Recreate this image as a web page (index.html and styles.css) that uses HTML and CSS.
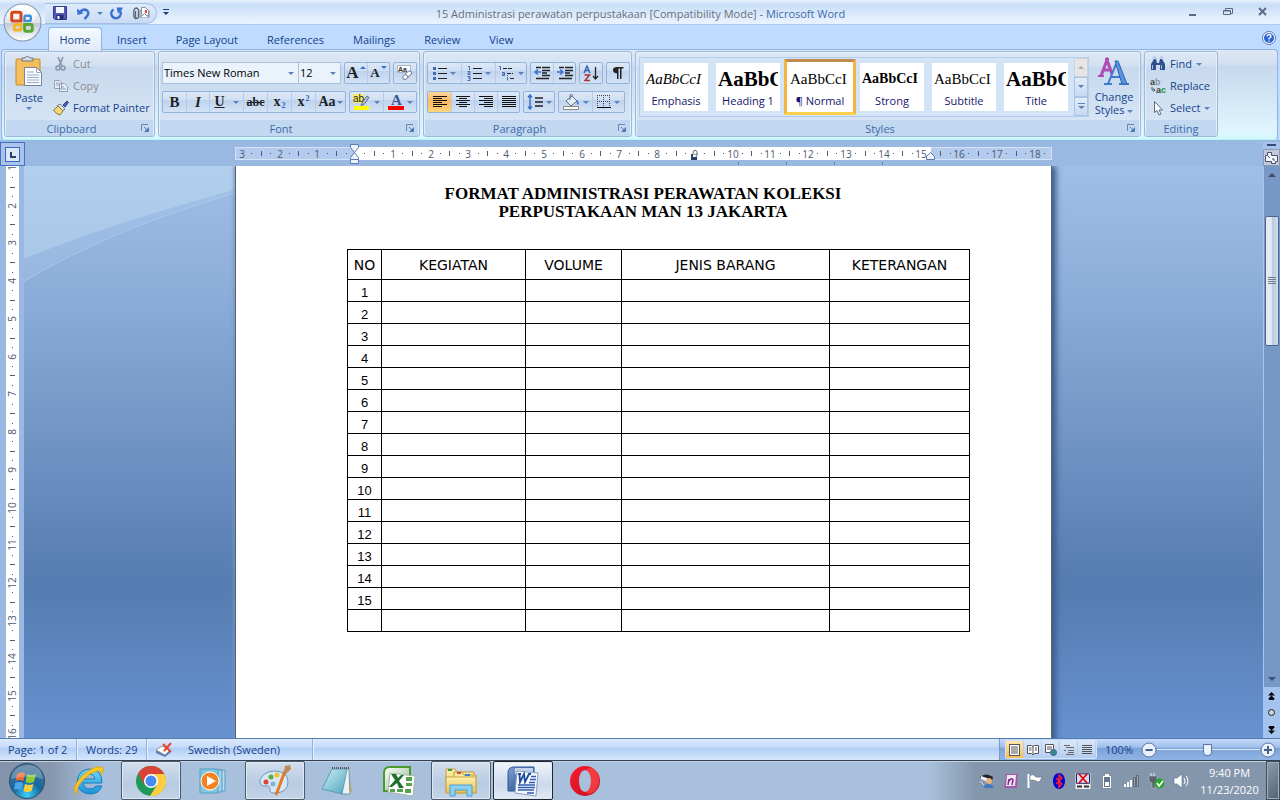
FILE: index.html
```html
<!DOCTYPE html>
<html lang="en">
<head>
<meta charset="utf-8">
<title>15 Administrasi perawatan perpustakaan [Compatibility Mode] - Microsoft Word</title>
<link rel="stylesheet" href="styles.css">
</head>
<body>
<svg class="defs" aria-hidden="true">
  <defs>
    <linearGradient id="gOrb" x1="0" y1="0" x2="0" y2="1"><stop offset="0" stop-color="#fdfdfe"/><stop offset=".5" stop-color="#dfe3ea"/><stop offset=".52" stop-color="#c3cad6"/><stop offset="1" stop-color="#fff"/></linearGradient>
    <linearGradient id="gGreen" x1="0" y1="0" x2="1" y2="1"><stop offset="0" stop-color="#fff"/><stop offset="1" stop-color="#8fb787"/></linearGradient>
    <linearGradient id="gNavy" x1="0" y1="0" x2="1" y2="1"><stop offset="0" stop-color="#7fa2d6"/><stop offset="1" stop-color="#1c3f86"/></linearGradient>
    <linearGradient id="gPad" x1="0" y1="0" x2="1" y2="1"><stop offset="0" stop-color="#d2f0f5"/><stop offset="1" stop-color="#4aa4bd"/></linearGradient>
    <linearGradient id="gRed" x1="0" y1="0" x2="1" y2="1"><stop offset="0" stop-color="#ff1b2d"/><stop offset="1" stop-color="#c0101f"/></linearGradient>
    <radialGradient id="gStart" cx=".5" cy=".9" r=".9"><stop offset="0" stop-color="#3fd0f5"/><stop offset=".45" stop-color="#1667a0"/><stop offset="1" stop-color="#4d7391"/></radialGradient>
    <linearGradient id="gIe" x1="0" y1="0" x2="0" y2="1"><stop offset="0" stop-color="#73d6fb"/><stop offset="1" stop-color="#1a93d8"/></linearGradient>
    <linearGradient id="gFolder" x1="0" y1="0" x2="0" y2="1"><stop offset="0" stop-color="#fdf0ae"/><stop offset="1" stop-color="#e2c057"/></linearGradient>
    <symbol id="launch" viewBox="0 0 8 8"><path d="M.5 7V.5H7" fill="none" stroke="#6486b8"/><path d="M3 3l3 3M7.500 3.500v4h-4" fill="none" stroke="#4f78ad"/><path d="M7 4v3H4z" fill="#4f78ad"/></symbol>
  </defs>
</svg>

<header class="titlebar">
  <button class="orb" aria-label="Office Button">
    <svg viewBox="0 0 38 38"><circle cx="19" cy="19" r="18" fill="url(#gOrb)" stroke="#8693a8"/><ellipse cx="19" cy="11" rx="14" ry="9" fill="#fff" opacity=".5"/>
      <path d="M17.500 17.500H10q-1.500 0-1.500-1.500v-5.500Q8.500 9 10 9h6q1.500 0 1.500 1.500z" fill="none" stroke="#d8481c" stroke-width="3"/>
      <path d="M21 17.500v-4q0-1 1-1h4q1 0 1 1v3q0 1-1 1z" fill="none" stroke="#3d8fd8" stroke-width="2.400"/>
      <path d="M17.500 21v4.500q0 1-1 1H12q-1 0-1-1V22q0-1 1-1z" fill="none" stroke="#f5b51c" stroke-width="2.600"/>
      <path d="M21 21h6q1.500 0 1.500 1.500V26q0 1.500-1.500 1.500h-4.500Q21 27.500 21 26z" fill="none" stroke="#58a630" stroke-width="2.800"/></svg>
  </button>
  <div class="qat">
    <button aria-label="Save"><svg width="14" height="14" viewBox="0 0 14 14"><path d="M.5.500h13v13H2L.5 12z" fill="#5456b8" stroke="#36398e"/><path d="M3 1h8v6H3z" fill="#f3f6ff"/><path d="M3.500 9h7v4.500h-7z" fill="#25296d"/><path d="M4.500 10h2v3h-2z" fill="#fff"/></svg></button>
    <button aria-label="Undo"><svg width="13" height="13" viewBox="0 0 13 13"><path d="M3 4.500Q8 1 10.500 4t-3 8" fill="none" stroke="#3c70cf" stroke-width="2.500"/><path d="M0 1.500l.5 6.500 6-1.500z" fill="#3c70cf"/></svg></button>
    <button class="tiny" aria-label="Undo list"><i class="drop"></i></button>
    <button aria-label="Repeat"><svg width="13" height="13" viewBox="0 0 13 13"><path d="M3.500 2.500A4.700 4.700 0 1 0 10 4" fill="none" stroke="#3c70cf" stroke-width="2.500"/><path d="M6.500.5h6V2L8 6.500z" fill="#3c70cf"/></svg></button>
    <button aria-label="E-mail"><svg width="17" height="14" viewBox="0 0 17 14"><path d="M7 4.500h9v7H7z" fill="#fff" stroke="#7a8496"/><path d="M8.500 1.500h4l3 3v5h-7z" fill="#fff" stroke="#8a93a5"/><path d="M7 11.500l4.500-4 4.500 4" fill="#fff" stroke="#7a8496"/><path d="M12 4h2v3h-2z" fill="#d04b38"/><path d="M2.500 5v6q1.500 3 3 0V4Q3.500 0 .8 4v6q0 2 2 3" fill="none" stroke="#5d6677" stroke-width="1.300"/></svg></button>
  </div>
  <button class="qat-more" aria-label="Customize Quick Access Toolbar"><svg width="6" height="6" viewBox="0 0 6 6"><path d="M0 0h6v1H0zM0 3h6L3 6z" fill="#1d3d78"/></svg></button>
  <h1 class="title"><span>15 Administrasi perawatan perpustakaan [Compatibility Mode]</span> - Microsoft Word</h1>
  <div class="window-buttons">
    <button aria-label="Minimize"><svg width="10" height="10" viewBox="0 0 10 10"><path d="M1 8h7" stroke="#5b6a86" stroke-width="2"/></svg></button>
    <button aria-label="Restore"><svg width="10" height="10" viewBox="0 0 10 10"><path d="M2.500 3V1.500h7v5H8M.5 3.500h7v4h-7zM.5 4h7" fill="none" stroke="#5b6a86"/></svg></button>
    <button aria-label="Close"><svg width="10" height="10" viewBox="0 0 10 10"><path d="M1 1l7 7M8 1L1 8" stroke="#5b6a86" stroke-width="2"/></svg></button>
  </div>
</header>

<nav class="tabs" aria-label="Ribbon tabs">
  <button class="tab active">Home</button><button class="tab">Insert</button><button class="tab">Page Layout</button><button class="tab">References</button><button class="tab">Mailings</button><button class="tab">Review</button><button class="tab">View</button>
  <button class="help" aria-label="Help"><svg width="14" height="14" viewBox="0 0 14 14"><circle cx="7" cy="7" r="6.500" fill="#fff" stroke="#5a78b5"/><circle cx="7" cy="7" r="5" fill="#2a62d2"/><path d="M5 5.500Q5.200 3.500 7 3.500T9 5.200Q9 6.300 7 7.500v1M7 9.500v1.200" stroke="#fff" stroke-width="1.400" fill="none"/></svg></button>
</nav>

<section class="ribbon">
  <section class="group clipboard">
    <div class="group-body">
      <button class="big paste"><svg width="28" height="32" viewBox="0 0 28 32"><rect x="1" y="3" width="24" height="26" rx="1" fill="#f3bf5c" stroke="#c18a33"/><path d="M7 5V2h3q2-4 5 0h3v3z" fill="#d7dbe2" stroke="#6c7482"/><path d="M9.500 11.500h12l5 5v13h-17z" fill="#f8fbff" stroke="#74849d"/><path d="M21.500 11.500v5h5M12 16h7M12 19h12M12 21.500h12M12 24h12M12 26.500h12" stroke="#9aabc5" fill="none"/></svg>Paste<i class="drop"></i></button>
      <div class="stack">
        <button class="off"><svg width="16" height="16" viewBox="0 0 16 16"><path d="M5 1l4 9M10 1L6 10" stroke="#8a98ae" stroke-width="1.700"/><circle cx="5" cy="12" r="2" fill="none" stroke="#8a98ae" stroke-width="1.600"/><circle cx="10" cy="12" r="2" fill="none" stroke="#8a98ae" stroke-width="1.600"/></svg>Cut</button>
        <button class="off"><svg width="16" height="16" viewBox="0 0 16 16"><path d="M1.500 2.500h5l2 2v6h-7z M6.500 5.500h5l3 3v5h-8z" fill="#e6edf7" stroke="#93a1b8"/><path d="M3 5h3M3 7h3M8 9h3M8 11h5" stroke="#93a1b8"/></svg>Copy</button>
        <button><svg width="16" height="16" viewBox="0 0 16 16"><path d="M10 5l4-4 1.500 1.500L12 7z" fill="#4d5fae" stroke="#34407c"/><path d="M7 4l5 5-3 2-5-5z" fill="#dfe5ee" stroke="#68748a"/><path d="M5 6l5 5-3 4q-4-1-6.500-5Q3 8 5 6z" fill="#f3d877" stroke="#8d7434"/></svg>Format Painter</button>
      </div>
    </div>
    <footer>Clipboard<button aria-label="Clipboard options"><svg><use href="#launch"/></svg></button></footer>
  </section>

  <section class="group font">
    <div class="group-body rows">
      <div class="row">
        <div class="combos">
          <div class="combo name"><select aria-label="Font"><option>Times New Roman</option></select><i class="drop"></i></div>
          <div class="combo size"><select aria-label="Font size"><option>12</option></select><i class="drop"></i></div>
        </div>
        <div class="set"><button class="w22 serif big-a" aria-label="Grow font">A<sup class="tri-up"></sup></button><button class="w22 serif small-a" aria-label="Shrink font">A<sup class="tri-down"></sup></button></div>
        <div class="set"><button class="w22" aria-label="Clear formatting"><svg width="16" height="16" viewBox="0 0 16 16"><path d="M.5.500h13v7H.5z" fill="#fff" stroke="#a9b4c6"/><text x="1" y="7" class="icon-aa">Aa</text><path d="M5.500 12l6-6q3-.5 3.500 2l-6 6.500q-3.500.5-3.500-2.500z" fill="#fff" stroke="#66738d"/><path d="M8 9.500q3 .5 3 3" fill="none" stroke="#66738d"/></svg></button></div>
      </div>
      <div class="row">
        <div class="set">
          <button class="w23 serif b">B</button><button class="w23 serif it">I</button><button class="w34 serif u"><u>U</u><i class="drop"></i></button><button class="w24 serif s"><s>abc</s></button><button class="w24 serif sub" aria-label="Subscript">x<sub>2</sub></button><button class="w24 serif sub" aria-label="Superscript">x<sup>2</sup></button><button class="w30 serif aa">Aa<i class="drop"></i></button>
        </div>
        <div class="set">
          <button class="w33" aria-label="Highlight"><svg width="18" height="17" viewBox="0 0 18 17"><rect x="0" y="0" width="10" height="9" fill="#ffef5c"/><text x="0" y="8" class="icon-ab">ab</text><path d="M9 9l5-7 2 1.500-5 7-3 1z" fill="#b6c3d9" stroke="#5e6a80"/><path d="M1 12h15v4H1z" fill="#ffff00"/></svg><i class="drop"></i></button><button class="w33" aria-label="Font color"><svg width="16" height="17" viewBox="0 0 16 17"><text x="3" y="11" class="icon-color">A</text><path d="M0 12h16v4H0z" fill="#f00"/></svg><i class="drop"></i></button>
        </div>
      </div>
    </div>
    <footer>Font<button aria-label="Font options"><svg><use href="#launch"/></svg></button></footer>
  </section>

  <section class="group para">
    <div class="group-body rows">
      <div class="row">
        <div class="set">
          <button class="w33" aria-label="Bullets"><svg width="14" height="14" viewBox="0 0 14 14"><path d="M5 2.500h9M5 7.500h9M5 12.500h9" stroke="#222"/><path d="M0 1h3v3H0zM0 6h3v3H0zM0 11h3v3H0z" fill="#4468b0"/></svg><i class="drop"></i></button><button class="w34" aria-label="Numbering"><svg width="15" height="15" viewBox="0 0 15 15"><path d="M6 2.500h9M6 7.500h9M6 12.500h9" stroke="#222"/><path d="M1 .5h1.500V4M.5 5.500H3V7H1v1.500h2.500M.5 10.500H3V12H1M3 12v2.500H.5" fill="none" stroke="#4468b0"/></svg><i class="drop"></i></button><button class="w31" aria-label="Multilevel list"><svg width="17" height="15" viewBox="0 0 17 15"><path d="M5 2.500h9M9 7.500h6M12 12.500h5" stroke="#222" stroke-dasharray="4 1"/><path d="M1 .5h1.500V4M4 6.500h2.500v3H4.500V8h2M9.500 11v3.500M9.500 9v1" fill="none" stroke="#4468b0"/></svg><i class="drop"></i></button>
        </div>
        <div class="set"><button class="w22" aria-label="Decrease indent"><svg width="16" height="14" viewBox="0 0 16 14"><path d="M2 1.500h5M8 1.500h8M8 4.500h8M8 7h5M8 9.500h8M2 12.500h13" stroke="#222" stroke-width="1.500"/><path d="M7 6H2M4 3.500L1 6l3 2.500" stroke="#3c70cf" fill="none" stroke-width="1.500"/></svg></button><button class="w22" aria-label="Increase indent"><svg width="16" height="14" viewBox="0 0 16 14"><path d="M2 1.500h5M8 1.500h8M8 4.500h8M8 7h5M8 9.500h8M2 12.500h13" stroke="#222" stroke-width="1.500"/><path d="M0 6h5M3 3.500L6 6 3 8.500" stroke="#3c70cf" fill="none" stroke-width="1.500"/></svg></button></div>
        <div class="set"><button class="w22" aria-label="Sort"><svg width="17" height="17" viewBox="0 0 17 17"><path d="M1 8l3-7 3 7M2 5.500h4" fill="none" stroke="#3560b4" stroke-width="1.400"/><path d="M1.500 10h5L2 15.500h5" fill="none" stroke="#a33" stroke-width="1.500"/><path d="M12.500 2v12M10 11l2.500 3 2.500-3" fill="none" stroke="#222" stroke-width="1.300"/></svg></button></div>
        <div class="set"><button class="w22" aria-label="Show marks"><svg width="12" height="14" viewBox="0 0 12 14"><path d="M11.500 1H5Q1 1 1 4t4 3.500V13h1.500V2.500H8V13h1.500V2.500h2z" fill="#222"/></svg></button></div>
      </div>
      <div class="row">
        <div class="set">
          <button class="w23 on" aria-label="Align left"><svg width="14" height="12" viewBox="0 0 14 12"><path d="M0 .5h14M0 2.500h9M0 4.500h14M0 6.500h9M0 8.500h14M0 10.500h9" stroke="#111"/></svg></button><button class="w23" aria-label="Center"><svg width="14" height="12" viewBox="0 0 14 12"><path d="M0 .5h14M3 2.500h8M0 4.500h14M3 6.500h8M0 8.500h14M3 10.500h8" stroke="#111"/></svg></button><button class="w23" aria-label="Align right"><svg width="14" height="12" viewBox="0 0 14 12"><path d="M0 .5h14M5 2.500h9M0 4.500h14M5 6.500h9M0 8.500h14M5 10.500h9" stroke="#111"/></svg></button><button class="w22" aria-label="Justify"><svg width="14" height="12" viewBox="0 0 14 12"><path d="M0 .5h14M0 2.500h14M0 4.500h14M0 6.500h14M0 8.500h14M0 10.500h14" stroke="#111"/></svg></button>
        </div>
        <div class="set"><button class="w30" aria-label="Line spacing"><svg width="16" height="16" viewBox="0 0 16 16"><path d="M8 4h8M8 8h8M8 12h8" stroke="#222" stroke-width="1.400"/><path d="M3 1v14M1 3.500L3 1l2 2.500M1 12.500L3 15l2-2.500" fill="none" stroke="#3c70cf" stroke-width="1.500"/></svg><i class="drop"></i></button></div>
        <div class="set"><button class="w33" aria-label="Shading"><svg width="17" height="16" viewBox="0 0 17 16"><path d="M3 7l6-5 5 5-6 5z" fill="#e8eef7" stroke="#5a6c8c"/><path d="M7 6V1q2-2 3 1" fill="none" stroke="#5a6c8c"/><path d="M14 6q3 3 1 5-2-1-1-5z" fill="#3c70cf"/><path d="M.5 12.500h15v3H.5z" fill="#fff" stroke="#888"/></svg><i class="drop"></i></button><button class="w32" aria-label="Borders"><svg width="14" height="14" viewBox="0 0 14 14"><path d="M.5 0v13M6.500 0v13M12.500 0v13M0 .5h13M0 6.500h13" stroke="#445" stroke-dasharray="1 1"/><path d="M0 12.500h14" stroke="#000"/></svg><i class="drop"></i></button></div>
      </div>
    </div>
    <footer>Paragraph<button aria-label="Paragraph options"><svg><use href="#launch"/></svg></button></footer>
  </section>

  <section class="group styles">
    <div class="group-body">
      <div class="gallery">
        <button class="card"><span class="sample em">AaBbCcI</span>Emphasis</button>
        <button class="card"><span class="sample h">AaBbC</span>Heading 1</button>
        <button class="card chosen"><span class="sample">AaBbCcI</span>¶ Normal</button>
        <button class="card"><span class="sample st">AaBbCcI</span>Strong</button>
        <button class="card"><span class="sample">AaBbCcI</span>Subtitle</button>
        <button class="card"><span class="sample h">AaBbC</span>Title</button>
        <div class="gallery-nav"><button class="dim" aria-label="Previous styles"><i class="up"></i></button><button aria-label="Next styles"><i class="drop"></i></button><button aria-label="More styles"><svg width="7" height="6" viewBox="0 0 7 6"><path d="M0 0h7v1H0zM0 3h7L3.500 6z" fill="#5b82bb"/></svg></button></div>
      </div>
      <button class="big change"><svg width="32" height="30" viewBox="0 0 32 30"><path d="M3 19L9 3l5 14M5 13h8" fill="none" stroke="#b04bb5" stroke-width="3"/><path d="M0 19h6M7 2h4" stroke="#b04bb5" stroke-width="2"/><path d="M10 27l8-20M12 20h11M6 27h8M21 27h10" fill="none" stroke="#3f78cc" stroke-width="2"/><path d="M17 4h3l9 23h-5z" fill="#5b93e0" stroke="#2f62b5"/></svg><span>Change<br>Styles <i class="drop"></i></span></button>
    </div>
    <footer>Styles<button aria-label="Styles options"><svg><use href="#launch"/></svg></button></footer>
  </section>

  <section class="group editing">
    <div class="group-body">
      <div class="stack">
        <button><svg width="16" height="16" viewBox="0 0 16 16"><path d="M1 14V8l3-5h2l1 4h2l1-4h2l3 5v6h-5V9H6v5z" fill="#31508f"/><path d="M3 3V1h3v2M10 3V1h3v2M2.500 9v4M11.500 9v4" stroke="#a9bfe3" fill="none"/></svg>Find <i class="drop"></i></button>
        <button><svg width="16" height="16" viewBox="0 0 16 16"><text x="0" y="7" class="icon-rep">a<tspan fill="#8b95a5">b</tspan></text><text x="6" y="15" class="icon-rep">a<tspan fill="#1a9a2a">c</tspan></text><path d="M2 9v3h3M3.500 10.500L5 12l-1.500 1.500" fill="none" stroke="#456"/></svg>Replace</button>
        <button><svg width="16" height="16" viewBox="0 0 16 16"><path d="M4.500 1.500v11l2.500-2 2 4.500 2-1-2-4h3.500z" fill="#fff" stroke="#5a6a85"/></svg>Select <i class="drop"></i></button>
      </div>
    </div>
    <footer>Editing</footer>
  </section>
</section>

<main class="work">
  <div class="vcol">
    <button class="tab-selector" aria-label="Tab selector"><svg width="15" height="15" viewBox="0 0 15 15"><rect x=".5" y=".5" width="14" height="14" fill="#dbe6f6" stroke="#3e67c1"/><path d="M6 5v5h5" fill="none" stroke="#24406b" stroke-width="2"/></svg></button>
    <svg class="vruler" id="vruler" aria-hidden="true"></svg>
  </div>
  <div class="canvas">
    <div class="hrow"><svg class="hruler" id="hruler" viewBox="0 0 817 25" width="817" height="25" aria-hidden="true"></svg></div>
    <div class="desk">
      <svg class="curve" viewBox="0 0 211 130" width="211" height="130" aria-hidden="true"><path d="M0 0h211v24Q85 58 0 93z" fill="#c6def3" opacity=".5"/><path d="M0 93Q85 58 211 24v3Q90 60 0 115z" fill="#b5d0ef" opacity=".25"/><path d="M0 115Q90 62 211 27" fill="none" stroke="#bdd6f2" opacity=".6"/></svg>
      <article class="sheet">
        <h2>FORMAT ADMINISTRASI PERAWATAN KOLEKSI<br>PERPUSTAKAAN MAN 13 JAKARTA</h2>
        <table>
          <colgroup><col class="c1"><col class="c2"><col class="c3"><col class="c4"><col class="c5"></colgroup>
          <thead><tr><th>NO</th><th>KEGIATAN</th><th>VOLUME</th><th>JENIS BARANG</th><th>KETERANGAN</th></tr></thead>
          <tbody>
            <tr><td>1</td><td></td><td></td><td></td><td></td></tr>
            <tr><td>2</td><td></td><td></td><td></td><td></td></tr>
            <tr><td>3</td><td></td><td></td><td></td><td></td></tr>
            <tr><td>4</td><td></td><td></td><td></td><td></td></tr>
            <tr><td>5</td><td></td><td></td><td></td><td></td></tr>
            <tr><td>6</td><td></td><td></td><td></td><td></td></tr>
            <tr><td>7</td><td></td><td></td><td></td><td></td></tr>
            <tr><td>8</td><td></td><td></td><td></td><td></td></tr>
            <tr><td>9</td><td></td><td></td><td></td><td></td></tr>
            <tr><td>10</td><td></td><td></td><td></td><td></td></tr>
            <tr><td>11</td><td></td><td></td><td></td><td></td></tr>
            <tr><td>12</td><td></td><td></td><td></td><td></td></tr>
            <tr><td>13</td><td></td><td></td><td></td><td></td></tr>
            <tr><td>14</td><td></td><td></td><td></td><td></td></tr>
            <tr><td>15</td><td></td><td></td><td></td><td></td></tr>
            <tr><td></td><td></td><td></td><td></td><td></td></tr>
          </tbody>
        </table>
      </article>
    </div>
  </div>
  <div class="scroll">
    <div class="split"></div>
    <button class="ruler-toggle" aria-label="View ruler"><svg width="13" height="13" viewBox="0 0 13 13"><path d="M.5 4.500h2v-3h4v3h6v6h-2v2h-4v-2h-6z" fill="#f5f8ff" stroke="#47516b"/><path d="M3 5l2 2M7 8h2v2" stroke="#47516b" fill="none"/></svg></button>
    <div class="track">
      <button aria-label="Scroll up"><i class="arrow-up"></i></button>
      <div class="before"></div>
      <div class="thumb"><i></i></div>
      <div class="after"></div>
      <button aria-label="Scroll down"><i class="arrow-down"></i></button>
    </div>
    <div class="browse">
      <button aria-label="Previous page"><svg width="7" height="8" viewBox="0 0 7 8"><path d="M0 3.500L3.500 0 7 3.500zM0 7l3.500-3.500L7 7zM1 7h5v1H1z"/></svg></button>
      <button aria-label="Select browse object"><svg width="7" height="7" viewBox="0 0 7 7"><circle cx="3.500" cy="3.500" r="3" fill="#c9d2dc" stroke="#222"/></svg></button>
      <button aria-label="Next page"><svg width="7" height="8" viewBox="0 0 7 8"><path d="M0 1l3.500 3.500L7 1zM0 4.500L3.500 8 7 4.500zM1 0h5v1H1z"/></svg></button>
    </div>
  </div>
</main>

<footer class="status">
  <button class="s1">Page: 1 of 2</button>
  <button class="s2">Words: 29</button>
  <button class="s3" aria-label="Proofing errors"><svg width="18" height="16" viewBox="0 0 18 16"><path d="M1 9l6-4 5 5 3-2v3l-5 4-9-4z" fill="#5d7bb5"/><path d="M1 8l6-4 8 4-5 5z" fill="#fff" stroke="#8b96aa"/><path d="M8 2l8 8M16 1L9 9" stroke="#e5452a" stroke-width="2"/></svg></button>
  <button class="s4">Swedish (Sweden)</button>
  <div class="status-right">
    <div class="views">
      <button class="on" aria-label="Print layout"><svg width="12" height="12" viewBox="0 0 12 12"><rect x=".5" y=".5" width="10" height="11" fill="#fff" stroke="#555"/><path d="M2 3h7M2 5h7M2 7h7M2 9h7" stroke="#555"/></svg></button><button aria-label="Full screen reading"><svg width="12" height="12" viewBox="0 0 12 12"><path d="M.5 1.500h4l1.500 1 1.500-1h4v8h-4L6 11l-1.500-1.500h-4zM6 2v8M2 4h2.500M2 6h2.500M8 4h2M8 6h2" fill="#fff" stroke="#555"/></svg></button><button aria-label="Web layout"><svg width="12" height="12" viewBox="0 0 12 12"><path d="M.5.500h8v8h-8zM2 3h5M2 5h5" fill="#fff" stroke="#555"/><circle cx="8.500" cy="8.500" r="3" fill="#3a8a8c" stroke="#3d63a5"/></svg></button><button aria-label="Outline"><svg width="12" height="12" viewBox="0 0 12 12"><path d="M1 1.500h6M3 3.500h8M5 6.500h6M5 8.500h6M3 10.500h8M1 6.500h2" stroke="#666"/></svg></button><button aria-label="Draft"><svg width="12" height="12" viewBox="0 0 12 12"><path d="M1 1.500h10M1 3.500h10M1 5.500h10M1 7.500h10M1 9.500h10" stroke="#555"/></svg></button>
    </div>
    <button class="pct">100%</button>
    <div class="zoom">
      <button aria-label="Zoom out"><svg width="16" height="16" viewBox="0 0 16 16"><circle cx="8" cy="8" r="7" fill="#e9f0fa" stroke="#5876a5"/><path d="M4.500 8h7" stroke="#45618f" stroke-width="2"/></svg></button>
      <input type="range" min="0" max="100" value="49" aria-label="Zoom">
      <button aria-label="Zoom in"><svg width="16" height="16" viewBox="0 0 16 16"><circle cx="8" cy="8" r="7" fill="#e9f0fa" stroke="#5876a5"/><path d="M4 8h8M8 4v8" stroke="#45618f" stroke-width="2"/></svg></button>
    </div>
  </div>
</footer>

<footer class="taskbar">
  <button class="start" aria-label="Start"><svg width="38" height="38" viewBox="0 0 38 38"><circle cx="19" cy="19" r="17.500" fill="url(#gStart)" stroke="#24506f"/><path d="M9 12q4-3 8-1l-1.500 8q-4-2-8 0z" fill="#ee6a35"/><path d="M19 12q4 2 9 0l-2 8q-4 2-8.500 0z" fill="#8fc93c"/><path d="M7 21q4-2 8 0l-2 7q-4-2-7 0z" fill="#4da5e8"/><path d="M17 22q4 2 8.500 0l-2 7q-4 2-8 0z" fill="#fbd03c"/><path d="M3 17Q5 4 19 3t16 14Q20 12 3 17z" fill="#fff" opacity=".25"/></svg></button>
  <div class="apps">
    <button aria-label="Internet Explorer"><svg width="32" height="32" viewBox="0 0 32 32"><path d="M29 18H10q1 6 7 6 4 0 6-3h6q-3 8-12 8Q5 28 4 17 5 5 16 4q13 0 13 14zM10 14h12q-1-5-6-5t-6 5z" fill="url(#gIe)" stroke="#167cb9" fill-rule="evenodd"/><path d="M4 30Q-3 24 9 11 21 0 29 2q3 2-1 8 1-5-4-4-8 2-15 10-7 9-5 14z" fill="#f8c722" stroke="#d69c12" stroke-width=".7"/></svg></button>
    <button class="open" aria-label="Google Chrome"><svg width="30" height="30" viewBox="0 0 30 30"><circle cx="15" cy="15" r="15" fill="#1d9a58"/><path d="M15 8h13.300A15 15 0 0 1 14 30l7-11z" fill="#ffcd42"/><path d="M2 7.500A15 15 0 0 1 28.300 8H15L8.500 19z" fill="#da4437"/><circle cx="15" cy="15" r="7" fill="#fff"/><circle cx="15" cy="15" r="5.500" fill="#4a8af4"/></svg></button>
    <button aria-label="Windows Media Player"><svg width="28" height="28" viewBox="0 0 28 28"><path d="M8 3h18v21H8z" fill="#b9ddee" stroke="#4d9fc4"/><path d="M5 3h18v22H5z" fill="#a0d2e8" stroke="#4d9fc4"/><path d="M1 2h18v24H1z" fill="#85c5e0" stroke="#4d9fc4"/><circle cx="11" cy="14" r="9" fill="#f5821f" stroke="#fff"/><path d="M8 9l9 5-9 5z" fill="#fff"/></svg></button>
    <button class="open" aria-label="Paint"><svg width="32" height="32" viewBox="0 0 32 32"><path d="M15 6q14 0 14 11T15 28q-5 0-4-4 0-4-5-3-6 0-5-6Q4 7 15 6z" fill="#d6e6f4" stroke="#6c99bf"/><circle cx="7" cy="17" r="2.500" fill="#e0413a"/><circle cx="12" cy="12" r="2.500" fill="#5cae3c"/><circle cx="18" cy="10" r="2.500" fill="#efc22e"/><circle cx="14" cy="19" r="2.500" fill="#79b4dd"/><path d="M26 6L17 30" stroke="#e17a22" stroke-width="3"/><path d="M25 7l1-6 5-1 1 4-5 5z" fill="#c08a58"/></svg></button>
    <button aria-label="Notepad"><svg width="32" height="30" viewBox="0 0 32 30"><path d="M27 3l4 22-4 3z" fill="#c6a663"/><path d="M24 3h4l1 25h-9z" fill="#e9f1f4" stroke="#7b94a0"/><path d="M11 3h15l-5 25L1 23z" fill="url(#gPad)" stroke="#5b9fb5"/><path d="M11 2h17" stroke="#556" stroke-width="2" stroke-dasharray="1 1"/></svg></button>
    <button aria-label="Excel"><svg width="32" height="32" viewBox="0 0 32 32"><path d="M1 26V8q0-6 6-6h20v24z" fill="url(#gGreen)" stroke="#4a9a28" stroke-width="2"/><path d="M7 8l25 3-2 20L5 27z" fill="#fff" stroke="#a5b7a5"/><path d="M8 9h5l2 4 3-3h3l-5 6 5 7h-5l-2-5-5 4H6l6-7z" fill="#1f7030"/><path d="M23 12h6v4h-6zM23 18h6v3h-6zM7 24h5v3H7zM14 24h6v3h-6zM22 24h6v4h-6z" fill="#569f4f"/></svg></button>
    <button class="open" aria-label="Windows Explorer"><svg width="34" height="32" viewBox="0 0 34 32"><path d="M2 4h9l2 3h17v20H2z" fill="url(#gFolder)" stroke="#c09a3d"/><path d="M10 7h8l2 3h12v18H10z" fill="url(#gFolder)" stroke="#c09a3d"/><path d="M4 4h4v2H4z" fill="#3a9a3a"/><path d="M13 7h4v2h-4z" fill="#d84a2a"/><path d="M21 9h5v2h-5z" fill="#3a80d8"/><path d="M2 12h30v16H2z" fill="url(#gFolder)" stroke="#c9a547"/><path d="M6 31V20h22v11h-5v-6H11v6z" fill="#8cd0f2" stroke="#4d9fd2"/></svg></button>
    <button class="open front" aria-label="Microsoft Word"><svg width="32" height="32" viewBox="0 0 32 32"><path d="M1 26V8q0-6 6-6h20v24z" fill="url(#gNavy)" stroke="#2b5797"/><path d="M8 3h18v6H8z" fill="#c3d3ea"/><path d="M10 6l21 2-2 23-21-3z" fill="#f5f8fd" stroke="#8c9fbe"/><path d="M11 9h3M12.500 9l.5 8 4-8 1 8 4-8h2" fill="none" stroke="#1f4c9a" stroke-width="1.800"/><path d="M24 11.500h5M23 14.500h6M22 17.500h6M11 20h17M11 22.500h17M11 25h16M20 28h7" stroke="#2f5cae" stroke-width="1.500"/></svg></button>
    <button aria-label="Opera"><svg width="32" height="32" viewBox="0 0 32 32"><path d="M16 1a15 15 0 1 0 0 30 15 15 0 1 0 0-30zM16 5q6 1 6 11t-6 11q-6-1-6-11T16 5z" fill="url(#gRed)" fill-rule="evenodd"/><path d="M16 5q8-5 12 3 5 10-2 18-5 5-10 1 6-1 6-11T16 5z" fill="#ff4b4b" opacity=".7"/></svg></button>
  </div>
  <div class="tray">
    <button aria-label="Network agent"><svg width="16" height="16" viewBox="0 0 16 16"><path d="M1 4q6-5 13 0l-1 4H6z" fill="#222"/><path d="M2 3l6 2 3 3-3 1-6-3z" fill="#eef"/><circle cx="10" cy="8" r="3" fill="#e8b27a"/><path d="M5 15q1-5 5-4t5 4z" fill="#3f79c4"/><path d="M1 8l4 4" stroke="#ddd"/></svg></button>
    <button aria-label="Notes"><svg width="16" height="16" viewBox="0 0 16 16"><path d="M3 1h12l-1 14H1z" fill="#a35aa8"/><path d="M4 2h9l-1 11H3z" fill="#f3e4f5"/><path d="M5 12l1-6M6 8q3-4 4-1l-1 5" fill="none" stroke="#7c2b85" stroke-width="1.500"/></svg></button>
    <button aria-label="Action Center"><svg width="16" height="16" viewBox="0 0 16 16"><path d="M1.500 1v14" stroke="#fff" stroke-width="2"/><path d="M3 2.500q3-1.500 5 0v1q3 1.500 7 0l-2 5q-3 1-5-1-3-1-5 0z" fill="#fff" stroke="#596b80" stroke-width=".6"/></svg></button>
    <button aria-label="Bluetooth"><svg width="16" height="16" viewBox="0 0 16 16"><ellipse cx="8" cy="8" rx="6" ry="8" fill="#0000d8"/><path d="M5 5l6 6-3 3V2l3 3-6 6" fill="none" stroke="#f22" stroke-width="1.500"/></svg></button>
    <button aria-label="Display"><svg width="16" height="16" viewBox="0 0 16 16"><path d="M.5 0h15v16H.5z" fill="#eee"/><path d="M1.500.8h13v9.500h-13z" fill="#d6def4" stroke="#22246c"/><path d="M4 1l8 9M12 1l-8 9" stroke="#e00" stroke-width="1.800"/><path d="M2 13.500h5M9 13.500h5" stroke="#333" stroke-width="2"/></svg></button>
    <button aria-label="Battery"><svg width="16" height="16" viewBox="0 0 16 16"><path d="M5.500 2.500v-2h5v2h2v13h-9v-13z" fill="#fff" stroke="#596b80" stroke-width=".6"/><path d="M5 4h6v10H5z" fill="#65758a"/><path d="M6 9h4v4H6z" fill="#fff"/></svg></button>
    <button aria-label="Wireless"><svg width="17" height="16" viewBox="0 0 17 16"><path d="M1 11h2v3H1zM4 9h2v5H4zM7 7h2v7H7z" fill="#fff"/><path d="M10.500 4.500h2v9h-2zM13.500 2.500h2v11h-2z" fill="#9faab8" stroke="#5c6878"/></svg></button>
    <button aria-label="Safely remove hardware"><svg width="17" height="16" viewBox="0 0 17 16"><path d="M3 0v3M6 0v3" stroke="#eee"/><path d="M1 3h8v5l-2 2v5H4v-5L1 8z" fill="#5a636e" stroke="#bcc5cf" stroke-width=".5"/><circle cx="11.500" cy="10.500" r="5" fill="#27a52f"/><path d="M9 10l2 3 4-5" stroke="#fff" stroke-width="1.700" fill="none"/></svg></button>
    <button aria-label="Volume"><svg width="16" height="16" viewBox="0 0 16 16"><path d="M1 5h3l5-4v14l-5-4H1z" fill="#fff" stroke="#596b80" stroke-width=".6"/><path d="M11 5q2 3 0 6M13.500 3q3 5 0 10" stroke="#fff" fill="none"/></svg></button>
  </div>
  <div class="clock"><time>9:40 PM</time><time>11/23/2020</time></div>
  <button class="peek" aria-label="Show desktop"></button>
</footer>
<script src="rulers.js"></script>
</body>
</html>
```
FILE: rulers.js
```js
// Draws the centimetre scales along the top and left of the document.
const CM = 37.75;

function scale(from, to, origin, place) {
  let out = "";
  for (let q = from * 4; q <= to * 4; q++) {
    const pos = Math.round(origin + (q * CM) / 4);
    const n = q / 4;
    if (n === 0) continue;
    if (Number.isInteger(n)) out += place("num", pos, Math.abs(n));
    else out += place(q % 2 === 0 ? "half" : "quarter", pos);
  }
  return out;
}

const h = document.getElementById("hruler");
h.innerHTML =
  '<rect x=".5" y="6.500" width="816" height="12" fill="#b3cbec" stroke="#d3e2f7"/>' +
  '<rect x="120" y="6" width="576" height="13" fill="#fff"/>' +
  scale(-3, 18.25, 120, (kind, x, n) => {
    if (kind === "num") return `<text x="${x}" y="17" text-anchor="middle">${n}</text>`;
    const r = kind === "half" ? 3 : 1;
    return `<path d="M${x}.5 ${13 - r}v${r * 2 - 1}"/>`;
  }) +
  '<path d="M503.500 21v3M551.500 21v3M599.500 21v3M647.500 21v3" opacity=".6"/>' +
  '<path class="stop" d="M456 13h2v3h4v3h-6z"/>' +
  '<path class="mark" d="M115.500 3.500h8v3l-4 5-4-5zM115.500 18.500v-2l4-5 4 5v2zM115.500 18.500h8v4h-8z"/>' +
  '<path class="mark" d="M691.500 18.500v-3l4-4 4 4v3z"/>';

const v = document.getElementById("vruler");
v.innerHTML =
  '<rect x="6" width="13" height="100%" fill="#fff"/>' +
  scale(1, 30, -36, (kind, y, n) => {
    if (kind === "num") return `<text transform="translate(16 ${y}) rotate(-90)" text-anchor="middle">${n}</text>`;
    const r = kind === "half" ? 3 : 1;
    return `<path d="M${13 - r} ${y}.5h${r * 2 - 1}"/>`;
  });
```
FILE: styles.css
```css
* { box-sizing: border-box; }
body {
  margin: 0;
  height: 100vh;
  display: flex;
  flex-direction: column;
  overflow: hidden;
  font: 11px/14px "Open Sans", "Noto Sans", sans-serif;
  color: #15428b;
  background: #bfdbff;
}
button {
  font: inherit;
  color: inherit;
  background: none;
  border: 0;
  padding: 0;
  display: flex;
  align-items: center;
  justify-content: center;
}
svg { display: block; flex: none; }
.defs { position: absolute; width: 0; height: 0; }

.drop {
  flex: none;
  display: inline-block;
  vertical-align: middle;
  border: 3px solid transparent;
  border-top-color: #5b82bb;
  border-bottom-width: 0;
}
.up { border: 3px solid transparent; border-bottom-color: #a9aeb8; border-top-width: 0; }

/* Title bar */
.titlebar {
  position: relative;
  flex: none;
  height: 25px;
  display: flex;
  align-items: center;
  padding-left: 45px;
  background: linear-gradient(#e6f0fc, #cadff8 20%, #e8f2fe 90%);
  border-bottom: 1px solid #a8cdf5;
}
.orb { position: absolute; left: 3px; top: 3px; width: 39px; height: 39px; z-index: 3; }
.orb svg { width: 39px; height: 39px; }
.qat {
  display: flex;
  align-items: center;
  gap: 10px;
  height: 21px;
  width: 112px;
  margin-top: 2px;
  padding-left: 8px;
  border: 1px solid #a5bfe4;
  border-left: 0;
  border-radius: 0 11px 11px 0;
  background: linear-gradient(#dfebfa, #c8dcf6);
}
.qat .tiny { margin: 0 -3px; }
.qat-more { width: 18px; height: 20px; }
.title {
  flex: 1;
  margin: 0;
  padding: 3px 74px 0 0;
  text-align: center;
  font-size: 11px;
  font-weight: 400;
  color: #3e6aaa;
  white-space: nowrap;
}
.title span { color: #696f80; }
.window-buttons { width: 100px; display: flex; justify-content: flex-end; gap: 25px; padding-right: 12px; }

/* Tabs */
.tabs {
  position: relative;
  flex: none;
  display: flex;
  height: 24px;
  padding: 2px 4px 0 48px;
}
.tab { height: 24px; padding: 1px 14px 0 15px; white-space: nowrap; }
.tab.active {
  width: 54px;
  padding: 0;
  border: 1px solid #8db2e3;
  border-bottom: 0;
  border-radius: 4px 4px 0 0;
  background: linear-gradient(#f4f9ff, #e0eaf8);
  position: relative;
  z-index: 2;
}
.help { margin-left: auto; height: 22px; }

/* Ribbon */
.ribbon {
  flex: none;
  display: flex;
  gap: 3px;
  height: 91px;
  margin: 0 2px 0 1px;
  padding: 1px 2px 2px;
  border: 1px solid #8db2e3;
  border-bottom-color: #b7f3fb;
  border-radius: 4px;
  background: linear-gradient(#dde7f4, #d2e0f1 16%, #c7d9ed 18%, #e0f5ff 92%, #d3f8fb);
  box-shadow: 0 1px 0 #9bb9dd;
}
.group {
  display: flex;
  flex-direction: column;
  border: 1px solid #9cbad9;
  border-radius: 3px;
  background: linear-gradient(#dfe8f5, #d3e1f2 16%, #c8d9ee 18%, #d9e8f7);
  box-shadow: inset 0 0 0 1px #e4eefa;
}
.group-body { flex: 1; min-height: 0; display: flex; padding: 1px 3px 0; }
.group > footer {
  position: relative;
  flex: none;
  height: 16px;
  margin: 0 1px;
  line-height: 18px;
  text-align: center;
  color: #3e6aaa;
  background: #c1d8f0;
}
.clipboard > footer, .font > footer, .para > footer, .styles > footer { padding-right: 16px; }
.group > footer button { position: absolute; right: 4px; top: 4px; }
.group > footer svg { width: 8px; height: 8px; }
.clipboard { width: 151px; }
.font { width: 262px; }
.para { width: 209px; }
.styles { width: 506px; }
.editing { width: 74px; }

.big { flex-direction: column; justify-content: flex-start; gap: 3px; line-height: 13px; }
.paste { width: 42px; padding-top: 3px; }
.stack { display: flex; flex-direction: column; }
.stack button { height: 22px; gap: 4px; justify-content: flex-start; white-space: nowrap; }
.clipboard .stack { padding-left: 3px; }
.editing .stack { padding-left: 2px; }
.off { color: #8d8d8d; }

.rows { flex-direction: column; gap: 7px; padding: 10px 3px 0; }
.row { display: flex; gap: 3px; }
.set { display: flex; height: 22px; border: 1px solid #93b3da; border-radius: 2px; background: linear-gradient(#dbe8f7, #cfdff3 40%, #bfd3ee 42%, #d3e3f6); }
.set button { gap: 3px; border-left: 1px solid #b5cbe7; }
.set button:first-child { border-left: 0; }
.w22 { width: 22px; }
.w23 { width: 23px; }
.w24 { width: 24px; }
.w30 { width: 30px; }
.w31 { width: 31px; }
.w32 { width: 32px; }
.w33 { width: 33px; }
.w34 { width: 34px; }
.set .on { background: linear-gradient(#fbd5a0, #fdb95f 45%, #fed57c); border-radius: 2px; }
.serif { font-family: "Liberation Serif", serif; font-weight: 700; color: #222; }
.set .serif { gap: 1px; }
.big-a { font-size: 17px; }
.small-a { font-size: 13px; }
.tri-up, .tri-down { align-self: flex-start; margin-top: 3px; border: 3px solid transparent; }
.tri-up { border-bottom-color: #3c70cf; border-top-width: 0; }
.tri-down { border-top-color: #3c70cf; border-bottom-width: 0; }
.b, .it { font-size: 15px; }
.it { font-style: italic; }
.set .u { font-size: 14px; gap: 8px; }
.s { font-size: 12px; }
.sub, .aa { font-size: 14px; }
.sub sub, .sub sup { font-size: 8px; line-height: 8px; color: #2c62c4; }
.sub sub { align-self: flex-end; padding-bottom: 2px; }
.sub sup { align-self: flex-start; padding-top: 3px; }
.icon-aa { font: 700 7px "Liberation Sans", sans-serif; fill: #333; }
.icon-ab { font: 10px "Liberation Sans", sans-serif; fill: #222; }
.icon-color { font: 700 15px "Liberation Serif", serif; fill: #3a5796; }
.icon-rep { font: 700 9px "Liberation Sans", sans-serif; fill: #444; }

.combos { display: flex; }
.combo { position: relative; height: 22px; border: 1px solid #abc1de; background: #eaf2fb; }
.combo + .combo { border-left: 0; }
.combo.name { width: 137px; }
.combo.size { width: 42px; }
.combo select {
  appearance: none;
  width: 100%;
  height: 20px;
  padding: 0 1px;
  border: 0;
  background: none;
  font: inherit;
  color: #000;
}
.combo .drop { position: absolute; right: 4px; top: 9px; pointer-events: none; }

.styles .group-body { gap: 3px; padding: 5px 3px 0; }
.gallery { display: flex; align-items: center; gap: 4px; height: 60px; padding-left: 2px; border: 1px solid #b5cdec; background: #d4e4f7; }
.card {
  width: 68px;
  height: 52px;
  flex-direction: column;
  justify-content: flex-start;
  overflow: hidden;
  border: 2px solid #d4e4f7;
  background: #fff;
  color: #15156b;
  white-space: nowrap;
}
.card.chosen { width: 72px; height: 56px; margin: 0 -2px; padding-top: 1px; border: 3px solid #f6b441; border-top-color: #c08a51; border-bottom-color: #fcd24d; border-radius: 2px; }
.sample { width: 60px; height: 31px; line-height: 32px; overflow: hidden; text-align: left; font-family: "Liberation Serif", serif; font-size: 15px; color: #000; }
.sample.em { font-style: italic; }
.sample.st { font-weight: 700; font-size: 14px; }
.sample.h { font-weight: 700; font-size: 21px; }
.gallery-nav { align-self: stretch; display: flex; flex-direction: column; width: 14px; }
.gallery-nav button { flex: 1; border: 1px solid #a9c3e6; background: linear-gradient(#e3edf9, #c6d9f2); }
.gallery-nav .dim { background: #e6e6e6; border-color: #cfd3d8; }
.change { width: 44px; }

/* Work area */
.work { flex: 1; min-height: 0; display: flex; background: #9ab9e2; padding-top: 2px; }
.vcol { width: 24px; display: flex; flex-direction: column; }
.tab-selector { height: 24px; width: 25px; border: 1px solid #4670c4; background: #a9c3ec; flex: none; }
.vruler { flex: 1; width: 24px; min-height: 0; }
.canvas { flex: 1; min-width: 0; display: flex; flex-direction: column; }
.hrow { height: 24px; flex: none; display: flex; justify-content: center; }
.hruler, .vruler { font: 10px "Open Sans", sans-serif; fill: #4d5a70; }
.hruler { margin-top: -1px; }
.hruler path, .vruler path { stroke: #4d5a70; }
.hruler .mark { fill: #eef3fb; stroke: #5a7cae; }
.hruler .stop { fill: #24406b; stroke: none; }
.desk { position: relative; flex: 1; min-height: 0; overflow: hidden; display: flex; justify-content: center; background: linear-gradient(#9fbfe8, #8fafdb 20%, #557cb0 73%, #6792d0); }
.curve { position: absolute; left: 0; top: 0; }
.sheet {
  position: relative;
  width: 817px;
  height: 900px;
  padding: 19px 81px 0 80px;
  border: solid #59616d;
  border-width: 0 1px;
  background: #fff;
  box-shadow: 4px 0 6px #3d5c8a, -1px 0 4px #7c9cca;
  color: #000;
}
.sheet h2 { margin: 0 0 28px; text-align: center; font: 700 17px/18px "Liberation Serif", serif; white-space: nowrap; }
.sheet table { width: calc(100% - 31px); margin-left: 31px; table-layout: fixed; border-collapse: collapse; font: 13px/18px "Liberation Sans", sans-serif; }
.sheet th, .sheet td { border: 1px solid #000; padding: 0; text-align: center; }
.sheet th { height: 30px; font: 14px/18px "DejaVu Sans", sans-serif; }
.sheet td { height: 22px; padding-top: 4px; line-height: 17px; }
.c1 { width: 34px; }
.c2 { width: 144px; }
.c3 { width: 96px; }
.c4 { width: 208px; }
.c5 { width: 140px; }

.scroll { width: 17px; display: flex; flex-direction: column; background: #a5c3ef; }
.split { height: 7px; border: solid #a5c3ef; border-width: 2px 4px 3px; background: #3b4a72; }
.ruler-toggle { height: 17px; border: 1px solid #8f99b3; background: #c3c9d8; }
.track { flex: 1; min-height: 0; display: flex; flex-direction: column; padding: 0 1px; background: #7797c6; border-left: 1px solid #a9c6ee; }
.track button { height: 17px; }
.arrow-up, .arrow-down { border: 4px solid transparent; }
.arrow-up { border-bottom-color: #454d68; border-top-width: 0; }
.arrow-down { border-top-color: #3d4e80; border-bottom-width: 0; }
.before { flex: 33; }
.after { flex: 326; }
.thumb { flex: 129; display: flex; align-items: center; justify-content: center; border: 1px solid #4f6493; border-radius: 2px; background: linear-gradient(90deg, #e9edf3, #dfe8f1 45%, #b9cbdd 55%, #d1dfea); }
.thumb i { width: 8px; height: 8px; background: repeating-linear-gradient(#6f7e8c 0 1px, transparent 1px 2px); }
.browse { height: 51px; display: flex; flex-direction: column; }
.browse button { flex: 1; }

/* Status bar */
.status {
  flex: none;
  height: 22px;
  display: flex;
  align-items: stretch;
  border-top: 1px solid #567db0;
  background: linear-gradient(#dbe9fd, #c5dbf9 40%, #afcdf6 42%, #d5e5fb 95%);
}
.status > button { justify-content: flex-start; border-right: 1px solid #93b3df; box-shadow: 1px 0 0 #e6f0fd; white-space: nowrap; }
.s1 { width: 77px; padding-left: 8px; }
.s2 { width: 70px; padding-left: 9px; }
.s3 { width: 32px; padding-left: 8px; }
.status .s3 { border-color: transparent; box-shadow: none; }
.s4 { width: 134px; padding-left: 9px; }
.status-right { margin-left: auto; width: 281px; display: flex; align-items: center; padding: 0 4px 0 5px; border-left: 1px solid #7899cb; background: linear-gradient(#c4dafa, #9fbfeb 40%, #7da2d6 42%, #8fb4e5); }
.views { flex: none; display: flex; border: 1px solid #d4e4fa; border-radius: 2px; }
.views button { width: 18px; height: 17px; border-right: 1px solid #b6cff0; background: linear-gradient(#d9e7f9, #b4cdee); }
.views .on { background: linear-gradient(#fde7b0, #f9bd4f); }
.pct { flex: none; width: 44px; }
.zoom { flex: 1; min-width: 0; display: flex; align-items: center; }
.zoom input { appearance: none; flex: 1; width: 0; min-width: 0; height: 16px; margin: 0; background: linear-gradient(#dce9fb, #dce9fb) center / 100% 1px no-repeat; }
.zoom input::-webkit-slider-thumb { appearance: none; width: 9px; height: 12px; border: 1px solid #5876a5; border-radius: 1px 1px 5px 5px; background: #eaf2fc; }

/* Taskbar */
.taskbar {
  flex: none;
  height: 40px;
  display: flex;
  align-items: stretch;
  border-top: 1px solid #35404f;
  box-shadow: inset 0 1px 0 #c3d3e8;
  background: linear-gradient(90deg, #8394aa, #8596ad 50px, #a8c0dc 100px, #a8c0dc 930px, #8496ab 975px);
}
.start { width: 54px; margin-right: 5px; }
.apps { display: flex; gap: 2px; }
.apps button { width: 60px; border: 1px solid transparent; border-radius: 2px; }
.apps .open { border-color: #4b5a6c; background: linear-gradient(#d2deec, #b8cbe2 60%, #c4d4e8); box-shadow: inset 0 0 0 1px #dfe8f3; }
.apps .front { border-color: #20262e; background: linear-gradient(#f2f6fb, #cbd9ec 60%, #e2eaf5); }
.tray { margin-left: auto; display: flex; align-items: center; gap: 8px; }
.clock { width: 77px; padding-left: 4px; display: flex; flex-direction: column; align-items: center; justify-content: center; line-height: 17px; color: #fff; }
.peek { width: 14px; border: 1px solid #3f4c5c; background: linear-gradient(135deg, #8c9bad, #536273); box-shadow: inset 0 0 0 1px #9fadbe; }
```
